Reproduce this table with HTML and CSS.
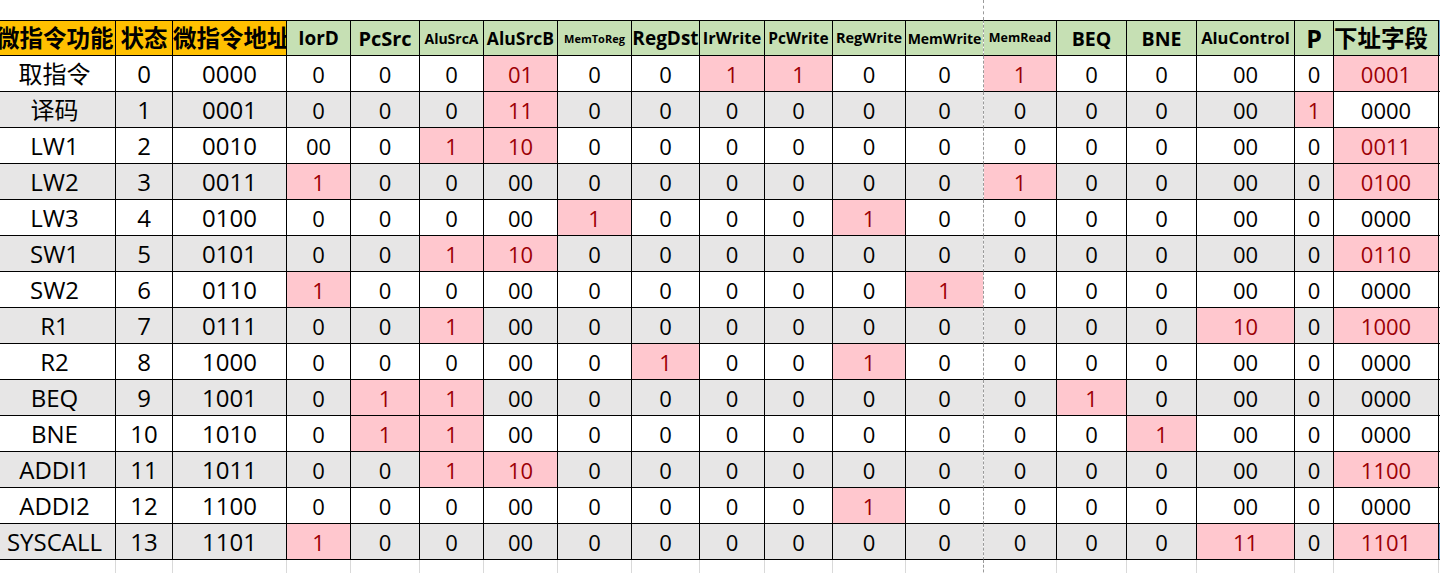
FILE: index.html
```html
<!DOCTYPE html>
<html lang="zh">
<head>
<meta charset="utf-8">
<title>微指令表</title>
<link rel="stylesheet" href="styles.css">
</head>
<body>
<div class="sheet">
  <div class="top-gap"></div>
  <div class="table">
    <div class="row head">
      <div class="c o cn">微指令功能</div><div class="c o cn">状态</div><div class="c o cn">微指令地址</div>
      <div class="c s19">IorD</div><div class="c s20">PcSrc</div><div class="c s14">AluSrcA</div><div class="c s17">AluSrcB</div><div class="c s11">MemToReg</div><div class="c s19">RegDst</div><div class="c s165">IrWrite</div><div class="c s15">PcWrite</div><div class="c s145">RegWrite</div><div class="c s14 mw">MemWrite</div><div class="c s12">MemRead</div><div class="c s18">BEQ</div><div class="c s18">BNE</div><div class="c s165">AluControl</div><div class="c s22">P</div><div class="c cn">下址字段</div><div class="c x edge"></div>
    </div>
    <div class="row">
      <div class="c k">取指令</div><div class="c k">0</div><div class="c k">0000</div>
      <div class="c">0</div><div class="c">0</div><div class="c">0</div><div class="c bad">01</div><div class="c">0</div><div class="c">0</div><div class="c bad">1</div><div class="c bad">1</div><div class="c">0</div><div class="c mw">0</div><div class="c bad">1</div><div class="c">0</div><div class="c">0</div><div class="c">00</div><div class="c">0</div><div class="c bad">0001</div><div class="c x"></div>
    </div>
    <div class="row alt">
      <div class="c k">译码</div><div class="c k">1</div><div class="c k">0001</div>
      <div class="c">0</div><div class="c">0</div><div class="c">0</div><div class="c bad">11</div><div class="c">0</div><div class="c">0</div><div class="c">0</div><div class="c">0</div><div class="c">0</div><div class="c mw">0</div><div class="c">0</div><div class="c">0</div><div class="c">0</div><div class="c">00</div><div class="c bad">1</div><div class="c w">0000</div><div class="c x"></div>
    </div>
    <div class="row">
      <div class="c k">LW1</div><div class="c k">2</div><div class="c k">0010</div>
      <div class="c">00</div><div class="c">0</div><div class="c bad">1</div><div class="c bad">10</div><div class="c">0</div><div class="c">0</div><div class="c">0</div><div class="c">0</div><div class="c">0</div><div class="c mw">0</div><div class="c">0</div><div class="c">0</div><div class="c">0</div><div class="c">00</div><div class="c">0</div><div class="c bad">0011</div><div class="c x"></div>
    </div>
    <div class="row alt">
      <div class="c k">LW2</div><div class="c k">3</div><div class="c k">0011</div>
      <div class="c bad">1</div><div class="c">0</div><div class="c">0</div><div class="c">00</div><div class="c">0</div><div class="c">0</div><div class="c">0</div><div class="c">0</div><div class="c">0</div><div class="c mw">0</div><div class="c bad">1</div><div class="c">0</div><div class="c">0</div><div class="c">00</div><div class="c">0</div><div class="c bad">0100</div><div class="c x"></div>
    </div>
    <div class="row">
      <div class="c k">LW3</div><div class="c k">4</div><div class="c k">0100</div>
      <div class="c">0</div><div class="c">0</div><div class="c">0</div><div class="c">00</div><div class="c bad">1</div><div class="c">0</div><div class="c">0</div><div class="c">0</div><div class="c bad">1</div><div class="c mw">0</div><div class="c">0</div><div class="c">0</div><div class="c">0</div><div class="c">00</div><div class="c">0</div><div class="c">0000</div><div class="c x"></div>
    </div>
    <div class="row alt">
      <div class="c k">SW1</div><div class="c k">5</div><div class="c k">0101</div>
      <div class="c">0</div><div class="c">0</div><div class="c bad">1</div><div class="c bad">10</div><div class="c">0</div><div class="c">0</div><div class="c">0</div><div class="c">0</div><div class="c">0</div><div class="c mw">0</div><div class="c">0</div><div class="c">0</div><div class="c">0</div><div class="c">00</div><div class="c">0</div><div class="c bad">0110</div><div class="c x"></div>
    </div>
    <div class="row">
      <div class="c k">SW2</div><div class="c k">6</div><div class="c k">0110</div>
      <div class="c bad">1</div><div class="c">0</div><div class="c">0</div><div class="c">00</div><div class="c">0</div><div class="c">0</div><div class="c">0</div><div class="c">0</div><div class="c">0</div><div class="c mw bad">1</div><div class="c">0</div><div class="c">0</div><div class="c">0</div><div class="c">00</div><div class="c">0</div><div class="c">0000</div><div class="c x"></div>
    </div>
    <div class="row alt">
      <div class="c k">R1</div><div class="c k">7</div><div class="c k">0111</div>
      <div class="c">0</div><div class="c">0</div><div class="c bad">1</div><div class="c">00</div><div class="c">0</div><div class="c">0</div><div class="c">0</div><div class="c">0</div><div class="c">0</div><div class="c mw">0</div><div class="c">0</div><div class="c">0</div><div class="c">0</div><div class="c bad">10</div><div class="c">0</div><div class="c bad">1000</div><div class="c x"></div>
    </div>
    <div class="row">
      <div class="c k">R2</div><div class="c k">8</div><div class="c k">1000</div>
      <div class="c">0</div><div class="c">0</div><div class="c">0</div><div class="c">00</div><div class="c">0</div><div class="c bad">1</div><div class="c">0</div><div class="c">0</div><div class="c bad">1</div><div class="c mw">0</div><div class="c">0</div><div class="c">0</div><div class="c">0</div><div class="c">00</div><div class="c">0</div><div class="c">0000</div><div class="c x"></div>
    </div>
    <div class="row alt">
      <div class="c k">BEQ</div><div class="c k">9</div><div class="c k">1001</div>
      <div class="c">0</div><div class="c bad">1</div><div class="c bad">1</div><div class="c">00</div><div class="c">0</div><div class="c">0</div><div class="c">0</div><div class="c">0</div><div class="c">0</div><div class="c mw">0</div><div class="c">0</div><div class="c bad">1</div><div class="c">0</div><div class="c">00</div><div class="c">0</div><div class="c">0000</div><div class="c x"></div>
    </div>
    <div class="row">
      <div class="c k">BNE</div><div class="c k">10</div><div class="c k">1010</div>
      <div class="c">0</div><div class="c bad">1</div><div class="c bad">1</div><div class="c">00</div><div class="c">0</div><div class="c">0</div><div class="c">0</div><div class="c">0</div><div class="c">0</div><div class="c mw">0</div><div class="c">0</div><div class="c">0</div><div class="c bad">1</div><div class="c">00</div><div class="c">0</div><div class="c">0000</div><div class="c x"></div>
    </div>
    <div class="row alt">
      <div class="c k">ADDI1</div><div class="c k">11</div><div class="c k">1011</div>
      <div class="c">0</div><div class="c">0</div><div class="c bad">1</div><div class="c bad">10</div><div class="c">0</div><div class="c">0</div><div class="c">0</div><div class="c">0</div><div class="c">0</div><div class="c mw">0</div><div class="c">0</div><div class="c">0</div><div class="c">0</div><div class="c">00</div><div class="c">0</div><div class="c bad">1100</div><div class="c x"></div>
    </div>
    <div class="row">
      <div class="c k">ADDI2</div><div class="c k">12</div><div class="c k">1100</div>
      <div class="c">0</div><div class="c">0</div><div class="c">0</div><div class="c">00</div><div class="c">0</div><div class="c">0</div><div class="c">0</div><div class="c">0</div><div class="c bad">1</div><div class="c mw">0</div><div class="c">0</div><div class="c">0</div><div class="c">0</div><div class="c">00</div><div class="c">0</div><div class="c">0000</div><div class="c x"></div>
    </div>
    <div class="row alt">
      <div class="c k">SYSCALL</div><div class="c k">13</div><div class="c k">1101</div>
      <div class="c bad">1</div><div class="c">0</div><div class="c">0</div><div class="c">00</div><div class="c">0</div><div class="c">0</div><div class="c">0</div><div class="c">0</div><div class="c">0</div><div class="c mw">0</div><div class="c">0</div><div class="c">0</div><div class="c">0</div><div class="c bad">11</div><div class="c">0</div><div class="c bad">1101</div><div class="c x edge"></div>
    </div>
    <div class="row ghost">
      <div class="c"></div><div class="c"></div><div class="c"></div><div class="c"></div><div class="c"></div><div class="c"></div><div class="c"></div><div class="c"></div><div class="c"></div><div class="c"></div><div class="c"></div><div class="c"></div><div class="c mw"></div><div class="c"></div><div class="c"></div><div class="c"></div><div class="c"></div><div class="c"></div><div class="c"></div><div class="c x"></div>
    </div>
  </div>
</div>
</body>
</html>
```

FILE: styles.css
```css
html, body {
  margin: 0;
  padding: 0;
  background: #fff;
}
body {
  overflow: hidden;
  font-family: "Open Sans", "Noto Sans CJK SC", sans-serif;
  color: #000;
}
.sheet {
  width: 1440px;
  height: 573px;
  overflow: hidden;
}
.top-gap {
  box-sizing: border-box;
  width: 984px;
  height: 20px;
  border-right: 1px dashed #9a9a9a;
}
.table {
  margin-left: -6px;
  width: 1500px;
}
.row {
  display: grid;
  grid-template-columns: 122px 57px 114px 64px 69px 64px 74px 74px 68px 65px 68px 73px 78px 73px 70px 70px 98px 39px 105px 54px;
  height: 36px;
  background: #fff;
  font-size: 22px;
}
.c {
  box-sizing: border-box;
  border-right: 1px solid #000;
  border-bottom: 1px solid #000;
  display: flex;
  align-items: center;
  justify-content: center;
  overflow: hidden;
  white-space: nowrap;
  line-height: 1;
  background-clip: padding-box;
}
.k {
  font-size: 24px;
}
.row.alt .c {
  background-color: #e7e6e6;
}
.row .c.bad {
  background-color: #ffc7ce;
  color: #9c0006;
}
.row .c.w,
.row .c.x {
  background-color: #fff;
}
.c.x {
  border-right: none;
}
.c.mw {
  border-right: 1px dashed #9a9a9a;
}

/* header */
.row.head .c {
  border-top: 1px solid #000;
  background-color: #c6e0b4;
  font-weight: 700;
  padding-top: 1px;
}
.row.head .c.o {
  background-color: #ffc000;
}
.row.head .c.x {
  background-color: #fff;
  border-top: none;
}
.row.head .c.cn {
  font-size: 23.5px;
  justify-content: flex-start;
}
.row.head .c.cn:first-child {
  padding-left: 2px;
}
.row.head .c.cn:last-of-type,
.row.head .c.cn:nth-child(2) {
  justify-content: center;
}
.c.edge {
  box-shadow: inset 1px 0 0 #6a9fd6;
}
.s11 { font-size: 11px; }
.s12 { font-size: 12.5px; }
.s14 { font-size: 14px; }
.s145 { font-size: 14.5px; }
.s15 { font-size: 15.5px; }
.s165 { font-size: 16.5px; }
.s17 { font-size: 17.5px; }
.s18 { font-size: 19.5px; }
.s19 { font-size: 19px; }
.s20 { font-size: 20px; }
.row.head .c.s22 { font-size: 25px; }

/* empty gridline row under the table */
.row.ghost .c {
  border-bottom: none;
  border-right: 1px solid #d9d9d9;
}
.row.ghost .c.mw {
  border-right: 1px dashed #9a9a9a;
}
.row.ghost .c.x {
  border-right: none;
}
```
